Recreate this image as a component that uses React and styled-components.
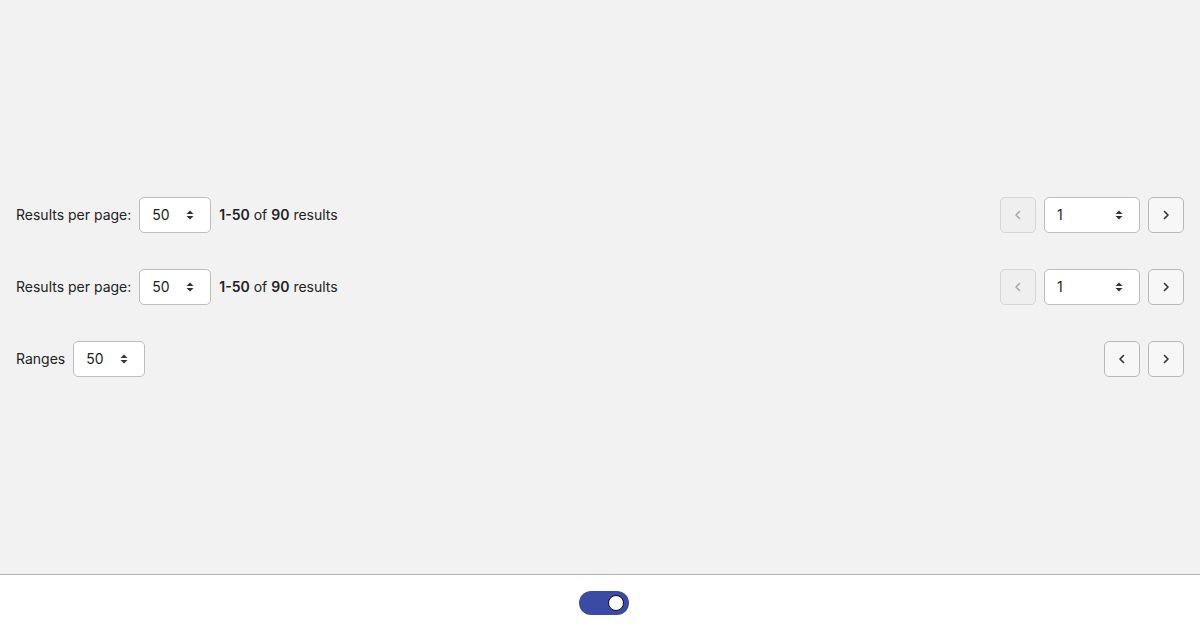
import React from "react";
import styled, { createGlobalStyle } from "styled-components";

const Global = createGlobalStyle`
  html, body { margin: 0; padding: 0; height: 100%; }
  body { background: #f2f2f2; font-family: Inter, "Noto Sans", sans-serif; color: #222; }
  #root { height: 100%; }
`;

const Page = styled.div`
  height: 630px;
  display: flex;
  flex-direction: column;
`;

const Main = styled.main`
  flex: 1;
  display: flex;
  flex-direction: column;
  gap: 36px;
  padding: 197px 16px 0;
`;

const Bar = styled.div`
  display: flex;
  align-items: center;
  justify-content: space-between;
  height: 36px;
`;

const Group = styled.div`
  display: flex;
  align-items: center;
  gap: 8px;
  font-size: 14px;
`;

const Label = styled.span`
  font-size: 14px;
  line-height: 16px;
  margin-top: -1px;
  color: #222;
`;

const Strong = styled.b`
  font-weight: 600;
`;

const SelectBox = styled.div`
  box-sizing: border-box;
  width: ${(p) => p.$w}px;
  height: 36px;
  border: 1px solid #bdbdbd;
  border-radius: 5px;
  background: #fff;
  display: flex;
  align-items: center;
  justify-content: space-between;
  padding: 0 15px 0 12px;
  font-size: 14px;
  line-height: 16px;
  color: #222;
`;

const Value = styled.span`
  margin-top: -1px;
`;

const IconButton = styled.button`
  box-sizing: border-box;
  width: 36px;
  height: 36px;
  border-radius: 5px;
  border: 1px solid ${(p) => (p.disabled ? "#d6d6d6" : "#b8b8b8")};
  background: ${(p) => (p.disabled ? "#efefef" : "#f7f7f7")};
  color: ${(p) => (p.disabled ? "#aaa" : "#333")};
  display: flex;
  align-items: center;
  justify-content: center;
  padding: 0;
`;

const Footer = styled.footer`
  height: 55px;
  border-top: 1px solid #b3b3b3;
  background: #fff;
  display: flex;
  align-items: center;
  justify-content: center;
`;

const Toggle = styled.div`
  width: 50px;
  height: 24px;
  border-radius: 12px;
  background: #3b4aa5;
  display: flex;
  align-items: center;
  justify-content: flex-end;
  padding: 0 5px;
  box-sizing: border-box;
  margin: 1px 0 0 8px;
`;

const Knob = styled.div`
  width: 14px;
  height: 14px;
  border-radius: 50%;
  background: #fff;
  border: 1.5px solid #111;
`;

const Arrows = () => (
  <svg width="10" height="12" viewBox="0 0 10 12">
    <path d="M1.5 5 L5 1.5 L8.5 5 Z" fill="#333" />
    <path d="M1.5 7 L5 10.5 L8.5 7 Z" fill="#333" />
  </svg>
);

const Chevron = ({ dir }) => (
  <svg width="12" height="12" viewBox="0 0 12 12" fill="none">
    <path
      d={dir === "left" ? "M7.5 2.5 L4 6 L7.5 9.5" : "M4.5 2.5 L8 6 L4.5 9.5"}
      stroke="currentColor"
      strokeWidth="1.6"
      strokeLinecap="round"
      strokeLinejoin="round"
    />
  </svg>
);

const Select = ({ value, w }) => (
  <SelectBox $w={w}>
    <Value>{value}</Value>
    <Arrows />
  </SelectBox>
);

const ResultsRow = () => (
  <Bar>
    <Group>
      <Label>Results per page:</Label>
      <Select value="50" w={72} />
      <Label>
        <Strong>1-50</Strong> of <Strong>90</Strong> results
      </Label>
    </Group>
    <Group>
      <IconButton disabled>
        <Chevron dir="left" />
      </IconButton>
      <Select value="1" w={96} />
      <IconButton>
        <Chevron dir="right" />
      </IconButton>
    </Group>
  </Bar>
);

export default function App() {
  return (
    <Page>
      <Global />
      <Main>
        <ResultsRow />
        <ResultsRow />
        <Bar>
          <Group>
            <Label>Ranges</Label>
            <Select value="50" w={72} />
          </Group>
          <Group>
            <IconButton>
              <Chevron dir="left" />
            </IconButton>
            <IconButton>
              <Chevron dir="right" />
            </IconButton>
          </Group>
        </Bar>
      </Main>
      <Footer>
        <Toggle>
          <Knob />
        </Toggle>
      </Footer>
    </Page>
  );
}
